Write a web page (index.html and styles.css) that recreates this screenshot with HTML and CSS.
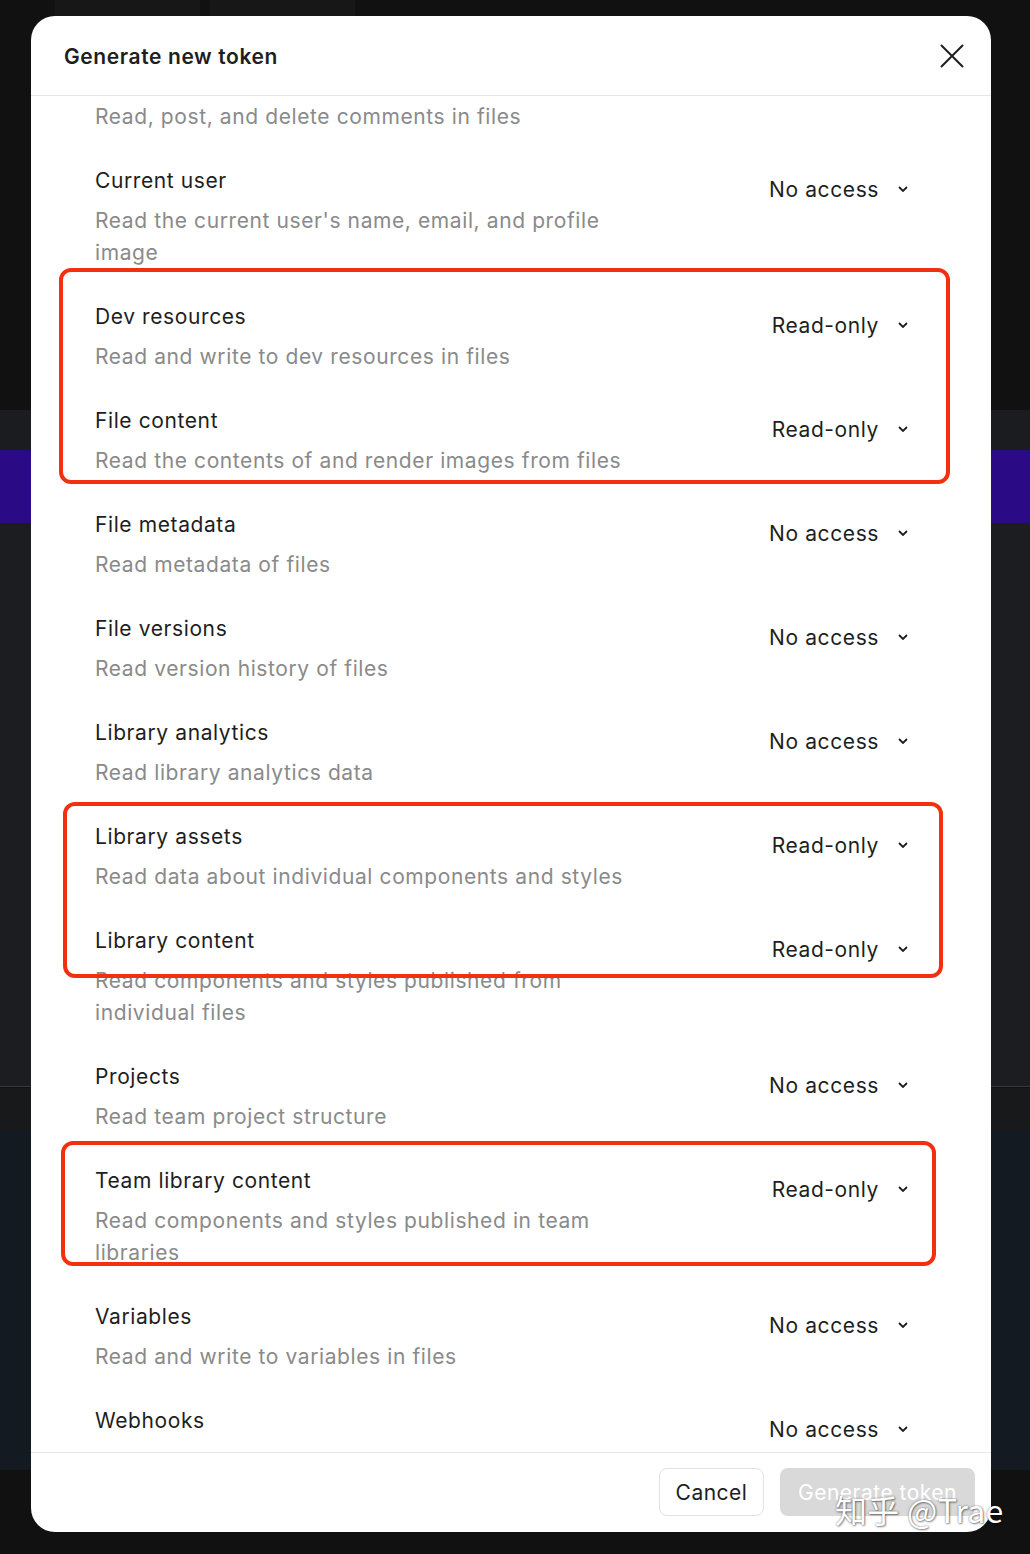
FILE: index.html
```html
<!DOCTYPE html>
<html lang="en">
<head>
<meta charset="utf-8">
<title>Generate new token</title>
<link rel="stylesheet" href="styles.css">
</head>
<body>
<div class="backdrop">
  <div class="bg-tabs"><span class="bg-tab"></span><span class="bg-tab"></span></div>
  <div class="bg-band bg-dark1"></div>
  <div class="bg-band bg-purple"></div>
  <div class="bg-band bg-dark2"></div>
  <div class="bg-band bg-dark3"></div>
  <div class="bg-band bg-img"></div>
</div>

<div class="modal">
  <div class="modal-header">
    <h1 class="modal-title">Generate new token</h1>
    <button class="close" aria-label="Close">
      <svg width="24" height="24" viewBox="0 0 24 24"><path d="M1 1 L23 23 M23 1 L1 23" stroke="#1e1e1e" stroke-width="2" fill="none"/></svg>
    </button>
  </div>

  <div class="modal-body">
    <div class="scroll">
      <div class="row">
        <div class="info"><div class="name">File comments</div><div class="desc">Read, post, and delete comments in files</div></div>
        <div class="select">No access<svg class="chev" width="10" height="6" viewBox="0 0 10 6"><path d="M1 1 L5 5 L9 1" stroke="#1e1e1e" stroke-width="1.8" fill="none"/></svg></div>
      </div>
      <div class="row">
        <div class="info"><div class="name">Current user</div><div class="desc">Read the current user's name, email, and profile image</div></div>
        <div class="select">No access<svg class="chev" width="10" height="6" viewBox="0 0 10 6"><path d="M1 1 L5 5 L9 1" stroke="#1e1e1e" stroke-width="1.8" fill="none"/></svg></div>
      </div>
      <div class="row">
        <div class="info"><div class="name">Dev resources</div><div class="desc">Read and write to dev resources in files</div></div>
        <div class="select">Read-only<svg class="chev" width="10" height="6" viewBox="0 0 10 6"><path d="M1 1 L5 5 L9 1" stroke="#1e1e1e" stroke-width="1.8" fill="none"/></svg></div>
      </div>
      <div class="row">
        <div class="info"><div class="name">File content</div><div class="desc">Read the contents of and render images from files</div></div>
        <div class="select">Read-only<svg class="chev" width="10" height="6" viewBox="0 0 10 6"><path d="M1 1 L5 5 L9 1" stroke="#1e1e1e" stroke-width="1.8" fill="none"/></svg></div>
      </div>
      <div class="row">
        <div class="info"><div class="name">File metadata</div><div class="desc">Read metadata of files</div></div>
        <div class="select">No access<svg class="chev" width="10" height="6" viewBox="0 0 10 6"><path d="M1 1 L5 5 L9 1" stroke="#1e1e1e" stroke-width="1.8" fill="none"/></svg></div>
      </div>
      <div class="row">
        <div class="info"><div class="name">File versions</div><div class="desc">Read version history of files</div></div>
        <div class="select">No access<svg class="chev" width="10" height="6" viewBox="0 0 10 6"><path d="M1 1 L5 5 L9 1" stroke="#1e1e1e" stroke-width="1.8" fill="none"/></svg></div>
      </div>
      <div class="row">
        <div class="info"><div class="name">Library analytics</div><div class="desc">Read library analytics data</div></div>
        <div class="select">No access<svg class="chev" width="10" height="6" viewBox="0 0 10 6"><path d="M1 1 L5 5 L9 1" stroke="#1e1e1e" stroke-width="1.8" fill="none"/></svg></div>
      </div>
      <div class="row">
        <div class="info"><div class="name">Library assets</div><div class="desc">Read data about individual components and styles</div></div>
        <div class="select">Read-only<svg class="chev" width="10" height="6" viewBox="0 0 10 6"><path d="M1 1 L5 5 L9 1" stroke="#1e1e1e" stroke-width="1.8" fill="none"/></svg></div>
      </div>
      <div class="row">
        <div class="info"><div class="name">Library content</div><div class="desc">Read components and styles published from individual files</div></div>
        <div class="select">Read-only<svg class="chev" width="10" height="6" viewBox="0 0 10 6"><path d="M1 1 L5 5 L9 1" stroke="#1e1e1e" stroke-width="1.8" fill="none"/></svg></div>
      </div>
      <div class="row">
        <div class="info"><div class="name">Projects</div><div class="desc">Read team project structure</div></div>
        <div class="select">No access<svg class="chev" width="10" height="6" viewBox="0 0 10 6"><path d="M1 1 L5 5 L9 1" stroke="#1e1e1e" stroke-width="1.8" fill="none"/></svg></div>
      </div>
      <div class="row">
        <div class="info"><div class="name">Team library content</div><div class="desc">Read components and styles published in team libraries</div></div>
        <div class="select">Read-only<svg class="chev" width="10" height="6" viewBox="0 0 10 6"><path d="M1 1 L5 5 L9 1" stroke="#1e1e1e" stroke-width="1.8" fill="none"/></svg></div>
      </div>
      <div class="row">
        <div class="info"><div class="name">Variables</div><div class="desc">Read and write to variables in files</div></div>
        <div class="select">No access<svg class="chev" width="10" height="6" viewBox="0 0 10 6"><path d="M1 1 L5 5 L9 1" stroke="#1e1e1e" stroke-width="1.8" fill="none"/></svg></div>
      </div>
      <div class="row">
        <div class="info"><div class="name">Webhooks</div><div class="desc">Create and manage webhooks</div></div>
        <div class="select">No access<svg class="chev" width="10" height="6" viewBox="0 0 10 6"><path d="M1 1 L5 5 L9 1" stroke="#1e1e1e" stroke-width="1.8" fill="none"/></svg></div>
      </div>
    </div>
  </div>

  <div class="modal-footer">
    <button class="btn btn-cancel">Cancel</button>
    <button class="btn btn-primary" disabled>Generate token</button>
  </div>
</div>

<div class="mark mark-1"></div>
<div class="mark mark-2"></div>
<div class="mark mark-3"></div>

<div class="watermark">知乎 @Trae</div>
</body>
</html>
```

FILE: styles.css
```css
* { box-sizing: border-box; }
html, body { margin: 0; padding: 0; }
body {
  width: 1030px;
  height: 1554px;
  background: #111111;
  font-family: Inter, "Noto Sans", "Noto Sans CJK SC", sans-serif;
  position: relative;
  overflow: hidden;
  padding-top: 16px;
}

.backdrop { position: absolute; inset: 0; z-index: 0; }
.bg-tabs { display: flex; gap: 10px; padding-left: 55px; height: 16px; }
.bg-tab { width: 145px; height: 16px; background: #171717; }
.bg-band { position: absolute; left: 0; right: 0; }
.bg-dark1 { top: 410px; height: 40px; background: #1b1c1f; }
.bg-purple { top: 450px; height: 73px; background: #2b0a85; }
.bg-dark2 { top: 523px; height: 564px; background: #1c1d20; border-bottom: 1px solid #3a3a3c; }
.bg-dark3 { top: 1088px; height: 42px; background: #18191b; }
.bg-img { top: 1130px; height: 340px; background: #141a22; }

.modal {
  position: relative;
  z-index: 1;
  margin-left: 31px;
  width: 960px;
  height: 1516px;
  background: #ffffff;
  border-radius: 24px;
  display: flex;
  flex-direction: column;
  overflow: hidden;
}

.modal-header {
  height: 80px;
  flex: none;
  display: flex;
  align-items: center;
  justify-content: space-between;
  padding: 2px 27px 0 33px;
  border-bottom: 1px solid #e6e6e6;
}
.modal-title {
  margin: 0;
  font-size: 21px;
  line-height: 32px;
  font-weight: 600;
  color: #1e1e1e;
  letter-spacing: 0.6px;
}
.close {
  border: 0;
  background: none;
  padding: 0;
  width: 24px;
  height: 24px;
  display: flex;
  margin-top: -2px;
}

.modal-body { flex: 1; overflow: hidden; }
.scroll { margin-top: -51px; }

.row {
  display: flex;
  justify-content: space-between;
  align-items: flex-start;
  padding: 16px 64px 16px 64px;
}
.info { width: 545px; }
.name {
  font-size: 21px;
  line-height: 32px;
  color: #1e1e1e;
  letter-spacing: 0.6px;
}
.desc {
  margin-top: 8px;
  font-size: 21px;
  line-height: 32px;
  color: #8a8a8a;
  letter-spacing: 0.6px;
}
.select {
  margin-top: 8px;
  margin-right: 19px;
  height: 32px;
  display: flex;
  align-items: center;
  gap: 19px;
  font-size: 21px;
  color: #1e1e1e;
  letter-spacing: 0.6px;
}
.chev { flex: none; }

.modal-footer {
  flex: none;
  height: 80px;
  border-top: 1px solid #e6e6e6;
  display: flex;
  justify-content: flex-end;
  align-items: flex-start;
  gap: 16px;
  padding: 15px 16px 0 0;
}
.btn {
  height: 48px;
  border-radius: 8px;
  font-family: inherit;
  font-size: 21px;
  letter-spacing: 0.5px;
  padding: 0 10px;
}
.btn-cancel {
  width: 105px;
  background: #fff;
  border: 1.5px solid #e2e2e2;
  color: #1e1e1e;
}
.btn-primary {
  width: 195px;
  background: #d9d9d9;
  border: 0;
  color: #ffffff;
}

.mark {
  position: absolute;
  z-index: 2;
  border: 4px solid #f2300f;
  border-radius: 12px;
}
.mark-1 { left: 59px; top: 268px; width: 891px; height: 216px; }
.mark-2 { left: 63px; top: 802px; width: 880px; height: 176px; }
.mark-3 { left: 61px; top: 1141px; width: 875px; height: 125px; }

.watermark {
  position: absolute;
  z-index: 3;
  left: 835px;
  top: 1486px;
  font-size: 32px;
  color: #ffffff;
  font-family: "Noto Sans CJK SC", "Noto Sans", sans-serif;
  text-shadow: 0 0 2px rgba(0,0,0,0.5), 1px 1px 2px rgba(0,0,0,0.4);
  white-space: nowrap;
  letter-spacing: 0.3px;
}
```
